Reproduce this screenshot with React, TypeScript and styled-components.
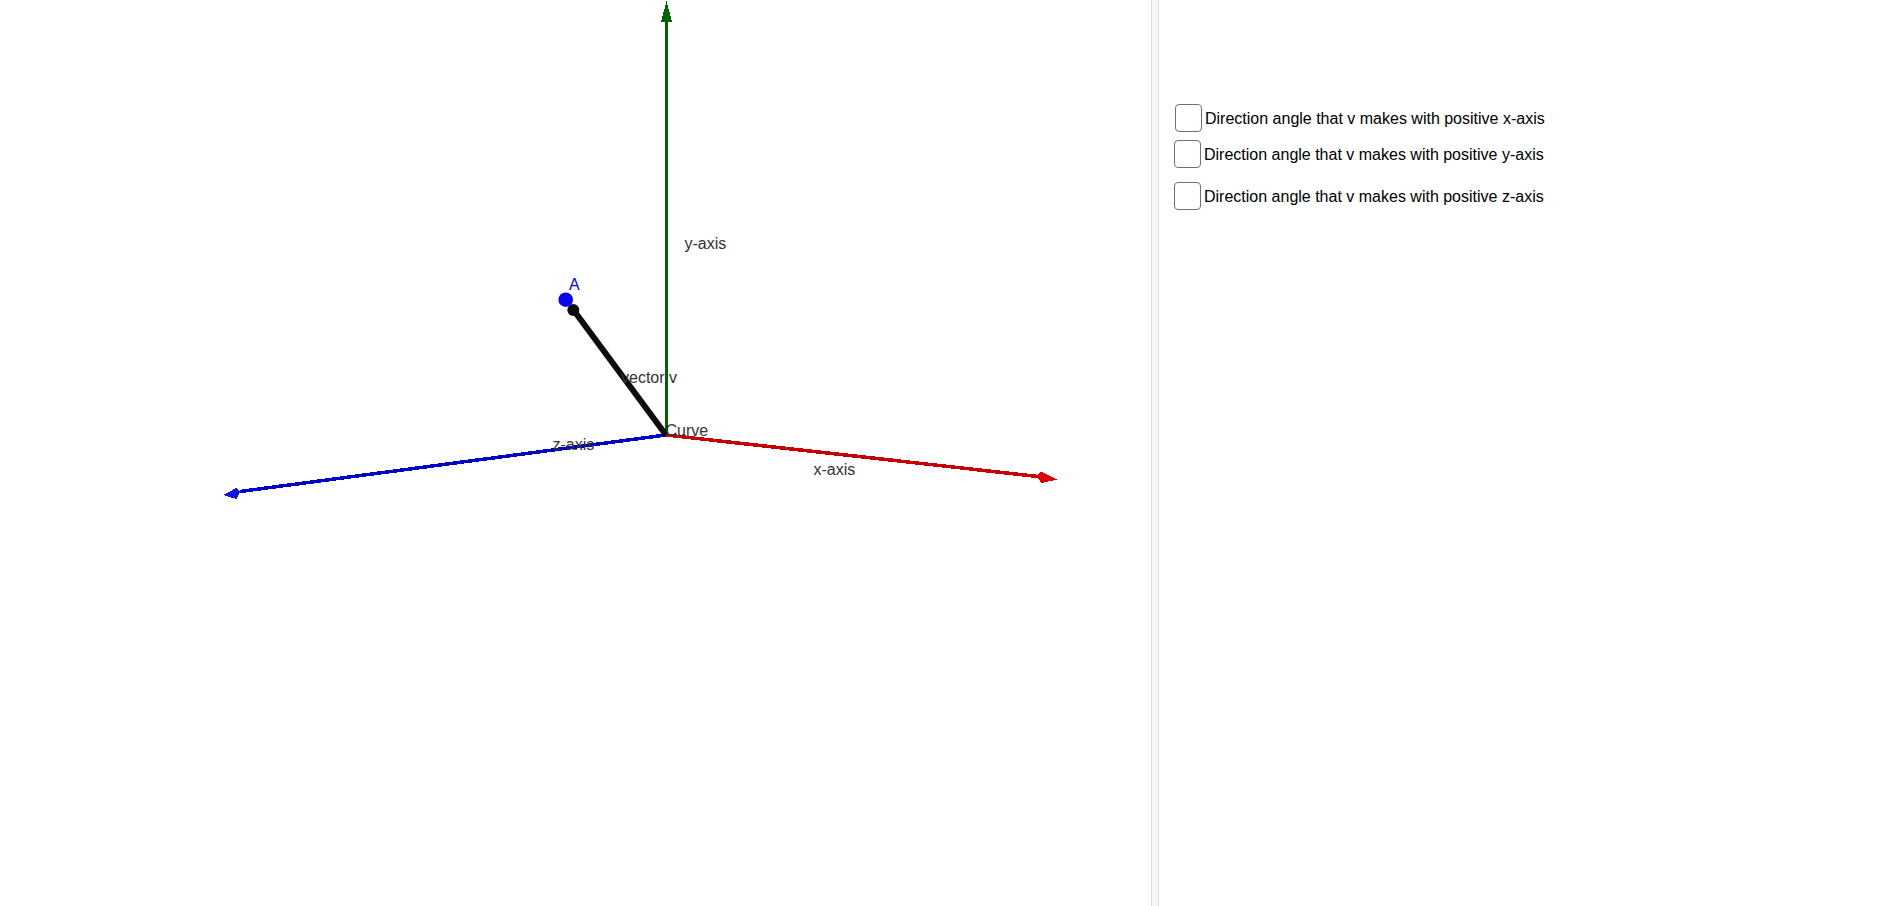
import React from 'react';
import styled, { createGlobalStyle } from 'styled-components';

const GlobalStyle = createGlobalStyle`
  html, body {
    margin: 0;
    padding: 0;
    height: 100%;
    overflow: hidden;
    background: #fff;
    font-family: "Liberation Sans", Arial, sans-serif;
  }
`;

const Applet = styled.div`
  display: flex;
  width: 1901px;
  height: 906px;
  background: #fff;
`;

const GraphicsView = styled.svg`
  display: block;
  flex: 0 0 1157px;
  height: 906px;
`;

const Divider = styled.div`
  flex: 0 0 8px;
  box-sizing: border-box;
  height: 100%;
  margin-left: -6px;
  background: #f5f5f5;
  border-left: 1px solid #dcdcdc;
  border-right: 1px solid #dcdcdc;
`;

const SidePanel = styled.div`
  flex: 1;
  display: flex;
  flex-direction: column;
  padding: 105px 0 0 16px;
`;

const Row = styled.label<{ $indent?: number; $gap: number }>`
  display: flex;
  align-items: center;
  gap: 3px;
  height: 28px;
  margin-left: ${({ $indent }) => $indent ?? 0}px;
  margin-bottom: ${({ $gap }) => $gap}px;
  font-size: 16px;
  line-height: 18px;
  color: #000;
`;

const Box = styled.input.attrs({ type: 'checkbox' })`
  appearance: none;
  box-sizing: border-box;
  width: 27px;
  height: 28px;
  margin: -2px 0 0;
  background: #fff;
  border: 1px solid #707070;
  border-radius: 4px;
`;

const AxisLabel = styled.text<{ $color?: string }>`
  font-family: "Liberation Sans", Arial, sans-serif;
  font-size: 16px;
  fill: ${({ $color }) => $color ?? '#333'};
`;

const Axis: React.FC<{
  color: string;
  headColor: string;
  from: [number, number];
  to: [number, number];
  head: string;
}> = ({ color, headColor, from, to, head }) => (
  <g shapeRendering="crispEdges">
    <line x1={from[0]} y1={from[1]} x2={to[0]} y2={to[1]} stroke={color} strokeWidth={3.5} />
    <polygon points={head} fill={headColor} />
  </g>
);

const rows = [
  { text: 'Direction angle that v makes with positive x-axis', indent: 0, gap: 8 },
  { text: 'Direction angle that v makes with positive y-axis', indent: -1, gap: 14 },
  { text: 'Direction angle that v makes with positive z-axis', indent: -1, gap: 0 },
];

const App: React.FC = () => (
  <Applet>
    <GlobalStyle />
    <GraphicsView viewBox="0 0 1157 906">
      <Axis color="#006400" headColor="#006400" from={[666.5, 435]} to={[666.5, 22]} head="666.5,1 661,22 672,22" />
      <Axis
        color="#c80000"
        headColor="#e00000"
        from={[666, 435]}
        to={[1038, 476.5]}
        head="1037,476.5 1040.5,471.5 1057,479.5 1041.5,483"
      />
      <Axis
        color="#0000c8"
        headColor="#1010e8"
        from={[666, 435]}
        to={[240, 491.5]}
        head="223,495 236.3,488 240,491.7 236.3,499"
      />
      <line x1={666} y1={435} x2={573.5} y2={310} stroke="#0d0d0d" strokeWidth={6} />
      <circle cx={573.3} cy={310} r={6} fill="#0d0d0d" />
      <circle cx={565.7} cy={299.7} r={7.3} fill="#0808f0" />
      <AxisLabel x={569} y={290} $color="#0000ff">A</AxisLabel>
      <AxisLabel x={684.5} y={249}>y-axis</AxisLabel>
      <AxisLabel x={621} y={383}>vector v</AxisLabel>
      <AxisLabel x={665.5} y={436}>Curve</AxisLabel>
      <AxisLabel x={552.5} y={450}>z-axis</AxisLabel>
      <AxisLabel x={813.5} y={475}>x-axis</AxisLabel>
    </GraphicsView>
    <Divider />
    <SidePanel>
      {rows.map((row) => (
        <Row key={row.text} $indent={row.indent} $gap={row.gap}>
          <Box />
          {row.text}
        </Row>
      ))}
    </SidePanel>
  </Applet>
);

export default App;
